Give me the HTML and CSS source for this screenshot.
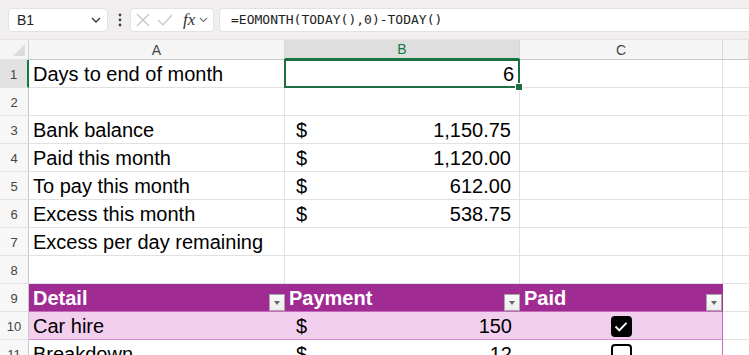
FILE: index.html
```html
<!DOCTYPE html>
<html lang="en">
<head>
    <meta charset="UTF-8">
    <meta name="viewport" content="width=device-width, initial-scale=1.0">
    <title>Budget sheet</title>
    <link rel="stylesheet" href="styles.css">
</head>
<body>
    <div class="toolbar">
        <div class="namebox">
            <span>B1</span>
            <svg class="chev" width="10" height="6" viewBox="0 0 10 6"><path d="M1 1l4 4 4-4" fill="none" stroke="#333" stroke-width="1.3"/></svg>
        </div>
        <svg class="dots" width="4" height="14" viewBox="0 0 4 14"><circle cx="2" cy="2" r="1.4" fill="#444"/><circle cx="2" cy="7" r="1.4" fill="#444"/><circle cx="2" cy="12" r="1.4" fill="#444"/></svg>
        <div class="fxbox">
            <svg width="14" height="14" viewBox="0 0 14 14"><path d="M1 1l12 12M13 1L1 13" fill="none" stroke="#c4c4c4" stroke-width="1.2"/></svg>
            <svg width="16" height="12" viewBox="0 0 16 12"><path d="M1 6l5 5L15 1" fill="none" stroke="#c4c4c4" stroke-width="1.2"/></svg>
            <span class="fx">fx</span>
            <svg class="chev" width="9" height="6" viewBox="0 0 9 6"><path d="M1 1l3.5 3.5L8 1" fill="none" stroke="#777" stroke-width="1.1"/></svg>
        </div>
        <div class="formula">=EOMONTH(TODAY(),0)-TODAY()</div>
    </div>

    <div class="sheet">
        <!-- column headers -->
        <div class="corner"><span class="tri"></span></div>
        <div class="colhead">A</div>
        <div class="colhead active">B</div>
        <div class="colhead">C</div>
        <div class="colhead last"></div>

        <!-- row 1 -->
        <div class="rowhead active">1</div>
        <div class="cell">Days to end of month</div>
        <div class="cell num selected">6<span class="handle"></span></div>
        <div class="cell"></div>
        <div class="cell last"></div>

        <!-- row 2 -->
        <div class="rowhead">2</div>
        <div class="cell"></div>
        <div class="cell"></div>
        <div class="cell"></div>
        <div class="cell last"></div>

        <!-- row 3 -->
        <div class="rowhead">3</div>
        <div class="cell">Bank balance</div>
        <div class="cell money"><span>$</span><span>1,150.75</span></div>
        <div class="cell"></div>
        <div class="cell last"></div>

        <!-- row 4 -->
        <div class="rowhead">4</div>
        <div class="cell">Paid this month</div>
        <div class="cell money"><span>$</span><span>1,120.00</span></div>
        <div class="cell"></div>
        <div class="cell last"></div>

        <!-- row 5 -->
        <div class="rowhead">5</div>
        <div class="cell">To pay this month</div>
        <div class="cell money"><span>$</span><span>612.00</span></div>
        <div class="cell"></div>
        <div class="cell last"></div>

        <!-- row 6 -->
        <div class="rowhead">6</div>
        <div class="cell">Excess this month</div>
        <div class="cell money"><span>$</span><span>538.75</span></div>
        <div class="cell"></div>
        <div class="cell last"></div>

        <!-- row 7 -->
        <div class="rowhead">7</div>
        <div class="cell">Excess per day remaining</div>
        <div class="cell"></div>
        <div class="cell"></div>
        <div class="cell last"></div>

        <!-- row 8 -->
        <div class="rowhead">8</div>
        <div class="cell"></div>
        <div class="cell"></div>
        <div class="cell"></div>
        <div class="cell last"></div>

        <!-- row 9: table header -->
        <div class="rowhead">9</div>
        <div class="cell th">Detail<span class="filter"></span></div>
        <div class="cell th">Payment<span class="filter"></span></div>
        <div class="cell th th-end">Paid<span class="filter"></span></div>
        <div class="cell last"></div>

        <!-- row 10 -->
        <div class="rowhead">10</div>
        <div class="cell tr band">Car hire</div>
        <div class="cell tr band money"><span>$</span><span>150</span></div>
        <div class="cell tr band tr-end center"><span class="check on"><svg width="14" height="11" viewBox="0 0 14 11"><path d="M1.5 5.5l3.8 3.8L12.5 1.8" fill="none" stroke="#fff" stroke-width="1.9"/></svg></span></div>
        <div class="cell last"></div>

        <!-- row 11 -->
        <div class="rowhead">11</div>
        <div class="cell tr">Breakdown</div>
        <div class="cell tr money"><span>$</span><span>12</span></div>
        <div class="cell tr tr-end center"><span class="check"></span></div>
        <div class="cell last"></div>
    </div>
</body>
</html>
```

FILE: styles.css
```css
html, body {
    margin: 0;
    height: 355px;
    overflow: hidden;
    background: #fff;
    font-family: "Liberation Sans", Arial, sans-serif;
}
.toolbar {
    height: 40px;
    box-sizing: border-box;
    background: #f0eeee;
    border-bottom: 1px solid #e4e2e2;
    display: flex;
    align-items: center;
    padding: 0 0 0 8px;
}
.namebox {
    width: 100px;
    height: 24px;
    box-sizing: border-box;
    background: #fff;
    border: 1px solid #e2e2e2;
    border-radius: 4px;
    display: flex;
    align-items: center;
    justify-content: space-between;
    padding: 0 6px 0 8px;
    font-size: 14px;
    color: #222;
}
.dots {
    margin: 0 8px 0 10px;
}
.fxbox {
    width: 84px;
    height: 24px;
    box-sizing: border-box;
    background: #fff;
    border: 1px solid #e2e2e2;
    border-radius: 4px;
    display: flex;
    align-items: center;
    padding: 0 3px 0 5px;
    gap: 7px;
}
.fxbox .fx {
    font-family: "Liberation Serif", "Times New Roman", serif;
    font-style: italic;
    font-size: 17px;
    color: #333;
    margin-left: 3px;
    margin-right: -3px;
}
.formula {
    flex: 1;
    height: 24px;
    box-sizing: border-box;
    margin-left: 5px;
    background: #fff;
    border: 1px solid #e2e2e2;
    border-right: none;
    border-radius: 4px 0 0 4px;
    display: flex;
    align-items: center;
    padding-left: 11px;
    font-family: "DejaVu Sans Mono", "Liberation Mono", monospace;
    font-size: 13px;
    color: #222;
}

.sheet {
    display: grid;
    grid-template-columns: 29px 256px 235px 203px 26px;
    grid-template-rows: 20px repeat(11, 28px);
}
.sheet > div {
    box-sizing: border-box;
    border-right: 1px solid #e1e1e1;
    border-bottom: 1px solid #e1e1e1;
}
.corner {
    background: #f5f5f5;
    position: relative;
    border-right-color: #d0d0d0 !important;
}
.corner .tri {
    position: absolute;
    right: 3px;
    bottom: 3px;
    width: 0;
    height: 0;
    border-left: 12px solid transparent;
    border-bottom: 12px solid #dcdcdc;
}
.colhead {
    background: #f5f5f5;
    color: #444;
    font-size: 14px;
    display: flex;
    align-items: center;
    justify-content: center;
    border-bottom-color: #c8c8c8 !important;
    border-right-color: #d8d8d8 !important;
}
.colhead.active {
    background: #dedede;
    color: #107c41;
    border-bottom: 2px solid #107c41 !important;
}
.rowhead {
    background: #f7f7f7;
    color: #444;
    font-size: 13px;
    display: flex;
    align-items: center;
    justify-content: center;
    padding-top: 2px;
    border-right-color: #c8c8c8 !important;
}
.rowhead.active {
    background: #e2e2e2;
    border-right: 2px solid #107c41 !important;
}
.cell {
    display: flex;
    align-items: center;
    padding: 2px 4px 0;
    font-size: 20px;
    color: #000;
    white-space: nowrap;
}
.cell.last {
    border-right: none !important;
}
.num {
    justify-content: flex-end;
    padding-right: 5px;
}
.money {
    justify-content: space-between;
    padding: 2px 8px 0 11px;
}
.center {
    justify-content: center;
    padding-top: 0;
}
.selected {
    position: relative;
}
.selected::after {
    content: "";
    position: absolute;
    left: -1px;
    top: -1px;
    right: -1px;
    bottom: -1px;
    border: 2px solid #1e6e42;
}
.selected .handle {
    position: absolute;
    right: -4px;
    bottom: -4px;
    width: 6px;
    height: 6px;
    background: #1e6e42;
    border: 1px solid #fff;
    z-index: 1;
}

/* table */
.th {
    background: #a02b93;
    color: #fff;
    font-weight: bold;
    border-right: none !important;
    border-bottom: 1px solid #c56abb !important;
}
.th-end {
    border-right: 1px solid #a02b93 !important;
}
.filter {
    margin-left: auto;
    margin-right: -4px;
    align-self: flex-end;
    width: 16px;
    height: 17px;
    box-sizing: border-box;
    background: linear-gradient(#fbfbfb, #ececec);
    border: 1px solid #a8a8a8;
    position: relative;
}
.filter::after {
    content: "";
    position: absolute;
    left: 4px;
    top: 6px;
    border-left: 3.5px solid transparent;
    border-right: 3.5px solid transparent;
    border-top: 4px solid #666;
}
.tr {
    border-right: none !important;
    border-bottom: 1px solid #d98ad0 !important;
}
.tr.band {
    background: #f2ceef;
}
.tr-end {
    border-right: 1px solid #c866bd !important;
}
.check {
    width: 21px;
    height: 21px;
    box-sizing: border-box;
    border: 2px solid #000;
    border-radius: 4px;
    background: #fff;
    display: flex;
    align-items: center;
    justify-content: center;
    margin-top: 2px;
}
.check.on {
    background: #000;
}
```
